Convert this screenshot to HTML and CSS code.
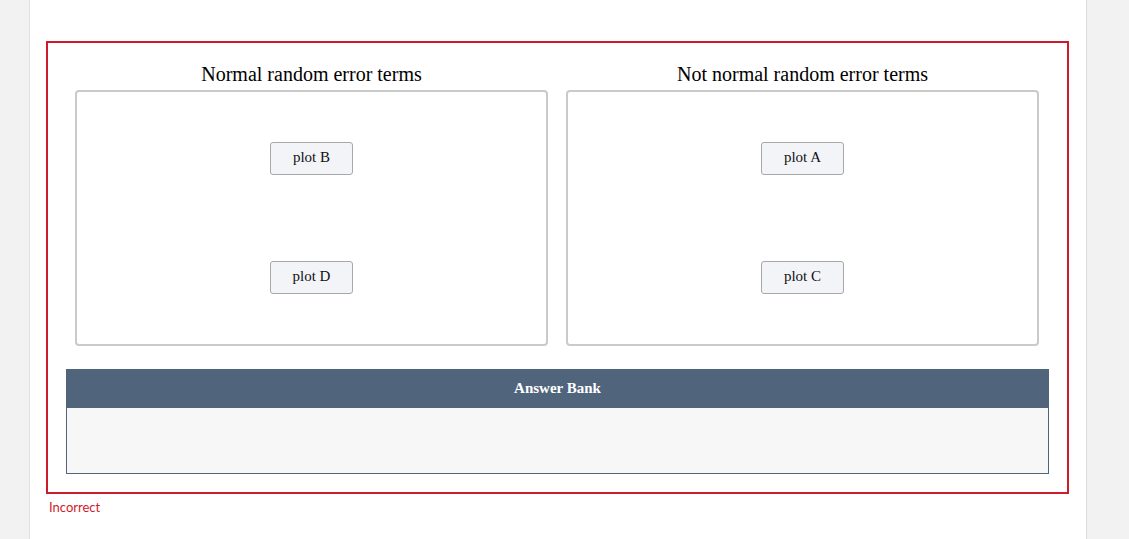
FILE: index.html
```html
<!DOCTYPE html>
<html>
<head>
<meta charset="utf-8">
<link rel="stylesheet" href="styles.css">
</head>
<body>
<div class="page">
  <div class="column">
    <div class="question">
      <div class="bins">
        <div class="bin">
          <div class="bin-title">Normal random error terms</div>
          <div class="bin-box">
            <div class="chip">plot B</div>
            <div class="chip">plot D</div>
          </div>
        </div>
        <div class="bin">
          <div class="bin-title">Not normal random error terms</div>
          <div class="bin-box">
            <div class="chip">plot A</div>
            <div class="chip">plot C</div>
          </div>
        </div>
      </div>
      <div class="bank">
        <div class="bank-head">Answer Bank</div>
        <div class="bank-body"></div>
      </div>
    </div>
    <div class="status">Incorrect</div>
  </div>
</div>
</body>
</html>
```
FILE: styles.css
```css
html, body {
  margin: 0;
  padding: 0;
  background: #f2f2f2;
  height: 100%;
}
.page {
  height: 539px;
  overflow: hidden;
}
.column {
  margin-left: 29px;
  width: 1058px;
  height: 539px;
  box-sizing: border-box;
  background: #fff;
  border-left: 1px solid #e0e0e0;
  border-right: 1px solid #dcdcdc;
  padding: 41px 16px 0 16px;
}
.question {
  border: 2px solid #cf1a2b;
  width: 1023px;
  box-sizing: border-box;
  padding: 19px 18px 18px 18px;
}
.bins {
  display: flex;
  gap: 18px;
  padding: 0 10px 0 9px;
}
.bin {
  flex: 1;
  display: flex;
  flex-direction: column;
}
.bin-title {
  font-family: "Liberation Serif", "Times New Roman", serif;
  font-size: 20px;
  line-height: 24px;
  text-align: center;
  color: #000;
  margin-bottom: 4px;
}
.bin-box {
  height: 256px;
  box-sizing: border-box;
  border: 2px solid #cacaca;
  border-radius: 4px;
  display: flex;
  flex-direction: column;
  align-items: center;
  padding-top: 50px;
  gap: 86px;
}
.chip {
  height: 33px;
  width: 83px;
  box-sizing: border-box;
  border: 1px solid #a8a8a8;
  border-radius: 3px;
  background: #f3f4f8;
  font-family: "Liberation Serif", "Times New Roman", serif;
  font-size: 15px;
  line-height: 28px;
  text-align: center;
  color: #111;
}
.bank {
  margin-top: 23px;
}
.bank-head {
  height: 39px;
  background: #50647c;
  color: #fff;
  font-family: "Liberation Serif", "Times New Roman", serif;
  font-weight: bold;
  font-size: 15px;
  line-height: 38px;
  text-align: center;
}
.bank-body {
  height: 66px;
  box-sizing: border-box;
  background: #f7f7f7;
  border: 1px solid #50647c;
  border-top: none;
}
.status {
  font-family: Lato, "Open Sans", sans-serif;
  font-size: 13px;
  color: #cf1a2b;
  margin-top: 5px;
  padding-left: 3px;
}
```
